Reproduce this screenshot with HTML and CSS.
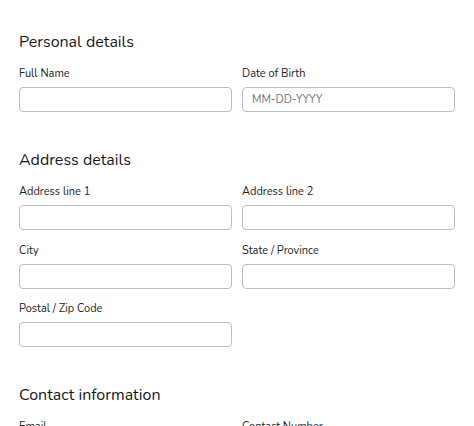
FILE: index.html
```html
<!DOCTYPE html>
<html lang="en">
<head>
<meta charset="utf-8">
<link rel="stylesheet" href="styles.css">
</head>
<body>
<form class="form">
  <section class="section">
    <h2 class="section-title">Personal details</h2>
    <div class="grid">
      <label class="field"><span class="label">Full Name</span><input class="input" type="text"></label>
      <label class="field"><span class="label">Date of Birth</span><input class="input" type="text" placeholder="MM-DD-YYYY"></label>
    </div>
  </section>
  <section class="section">
    <h2 class="section-title">Address details</h2>
    <div class="grid">
      <label class="field"><span class="label">Address line 1</span><input class="input" type="text"></label>
      <label class="field"><span class="label">Address line 2</span><input class="input" type="text"></label>
      <label class="field"><span class="label">City</span><input class="input" type="text"></label>
      <label class="field"><span class="label">State / Province</span><input class="input" type="text"></label>
      <label class="field"><span class="label">Postal / Zip Code</span><input class="input" type="text"></label>
    </div>
  </section>
  <section class="section">
    <h2 class="section-title">Contact information</h2>
    <div class="grid">
      <label class="field"><span class="label">Email</span><input class="input" type="text"></label>
      <label class="field"><span class="label">Contact Number</span><input class="input" type="text"></label>
    </div>
  </section>
</form>
</body>
</html>
```
FILE: styles.css
```css
html, body {
  margin: 0;
  padding: 0;
  background: #ffffff;
}
body {
  font-family: "Nunito", "Lato", "Noto Sans", sans-serif;
  color: #1c1d20;
}
.form {
  padding: 30px 19px 0 19px;
  display: flex;
  flex-direction: column;
  gap: 36px;
}
.section {
  display: flex;
  flex-direction: column;
  gap: 12px;
}
.section-title {
  margin: 0;
  font-size: 16px;
  line-height: 24px;
  font-weight: 400;
  color: #18191c;
}
.grid {
  display: grid;
  grid-template-columns: 1fr 1fr;
  column-gap: 10px;
  row-gap: 12.5px;
}
.field {
  display: flex;
  flex-direction: column;
  gap: 5px;
}
.label {
  font-size: 11px;
  line-height: 16px;
  color: #222327;
}
.input {
  box-sizing: border-box;
  height: 25px;
  width: 100%;
  margin: 0;
  border: 1px solid #b9bdc4;
  border-radius: 4px;
  padding: 0 9px;
  font-family: inherit;
  font-size: 11px;
  color: #222;
  background: #fff;
  outline: none;
}
.input::placeholder {
  color: #70757d;
}
```
